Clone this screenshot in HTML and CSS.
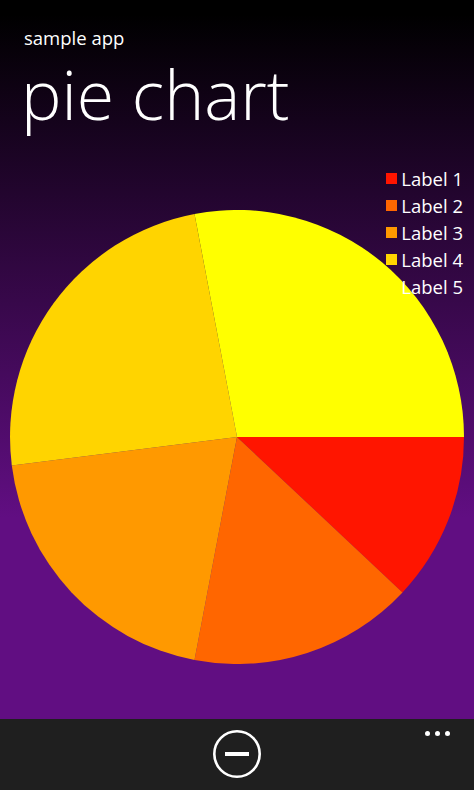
FILE: index.html
```html
<!DOCTYPE html>
<html lang="en">
<head>
  <meta charset="UTF-8" />
  <meta name="viewport" content="width=device-width, initial-scale=1" />
  <title>pie chart</title>
  <link rel="stylesheet" href="styles.css">
</head>
<body>
  <div class="phone">
    <main class="content">
      <header class="title-panel">
        <p class="app-name">sample app</p>
        <h1 class="page-name">pie chart</h1>
      </header>

      <div class="chart">
        <svg class="pie" viewBox="0 0 454 454" width="454" height="454" role="img" aria-label="Pie chart">
          <path fill="#ff1500" d="M227 227 L454 227 A227 227 0 0 1 392.5 382.4 Z" />
          <path fill="#ff6600" d="M227 227 L392.5 382.4 A227 227 0 0 1 184.5 450 Z" />
          <path fill="#ff9900" d="M227 227 L184.5 450 A227 227 0 0 1 1.8 255.4 Z" />
          <path fill="#ffd400" d="M227 227 L1.8 255.4 A227 227 0 0 1 184.5 4 Z" />
          <path fill="#ffff00" d="M227 227 L184.5 4 A227 227 0 0 1 454 227 Z" />
        </svg>

        <ul class="legend">
          <li class="legend-item"><span class="swatch swatch-1"></span>Label 1</li>
          <li class="legend-item"><span class="swatch swatch-2"></span>Label 2</li>
          <li class="legend-item"><span class="swatch swatch-3"></span>Label 3</li>
          <li class="legend-item"><span class="swatch swatch-4"></span>Label 4</li>
          <li class="legend-item"><span class="swatch swatch-5"></span>Label 5</li>
        </ul>
      </div>
    </main>

    <footer class="app-bar">
      <button class="round-btn" aria-label="Remove">
        <svg viewBox="0 0 48 48" width="48" height="48">
          <circle cx="24" cy="24" r="22.7" fill="none" stroke="#fff" stroke-width="2.6" />
          <rect x="12" y="22" width="24" height="4" fill="#fff" />
        </svg>
      </button>
      <div class="more" aria-label="More">
        <span></span>
        <span></span>
        <span></span>
      </div>
    </footer>
  </div>
</body>
</html>
```

FILE: styles.css
```css
/* Reset and base */
* {
  box-sizing: border-box;
  margin: 0;
  padding: 0;
}
html, body {
  height: 100%;
  background: #000;
  color: #fff;
  font-family: 'Open Sans', 'Noto Sans', sans-serif;
  overflow: hidden;
}

/* Page: content + application bar */
.phone {
  display: flex;
  flex-direction: column;
  height: 790px;
  width: 474px;
}
.content {
  flex: 1;
  display: flex;
  flex-direction: column;
  background: linear-gradient(180deg, #000 2%, #610e82 72%);
}

/* Title */
.title-panel {
  padding: 27px 0 0 24px;
  height: 210px;
}
.app-name {
  font-size: 18.5px;
  line-height: 22px;
}
.page-name {
  font-size: 68px;
  font-weight: 300;
  line-height: 64px;
  margin-top: 13px;
  margin-left: -3px;
}

/* Chart */
.chart {
  position: relative;
  flex: 1;
  padding-left: 10px;
}
.pie {
  display: block;
}
.legend {
  position: absolute;
  top: -44.5px;
  right: 11px;
  list-style: none;
}
.legend-item {
  display: flex;
  align-items: center;
  gap: 4px;
  height: 26.8px;
  font-size: 18.5px;
}
.swatch {
  width: 11px;
  height: 11px;
}
.swatch-1 { background: #ff1500; }
.swatch-2 { background: #ff6600; }
.swatch-3 { background: #ff9900; }
.swatch-4 { background: #ffd400; }
.swatch-5 { background: #ffff00; }

/* Application bar */
.app-bar {
  position: relative;
  flex: 0 0 71px;
  display: flex;
  justify-content: center;
  padding-top: 11px;
  background: #1f1f1f;
}
.round-btn {
  width: 48px;
  height: 48px;
  background: none;
  border: none;
}
.round-btn svg {
  display: block;
}
.more {
  position: absolute;
  top: 12px;
  right: 24px;
  display: flex;
  gap: 5px;
}
.more span {
  width: 5px;
  height: 5px;
  border-radius: 50%;
  background: #fff;
}
```
